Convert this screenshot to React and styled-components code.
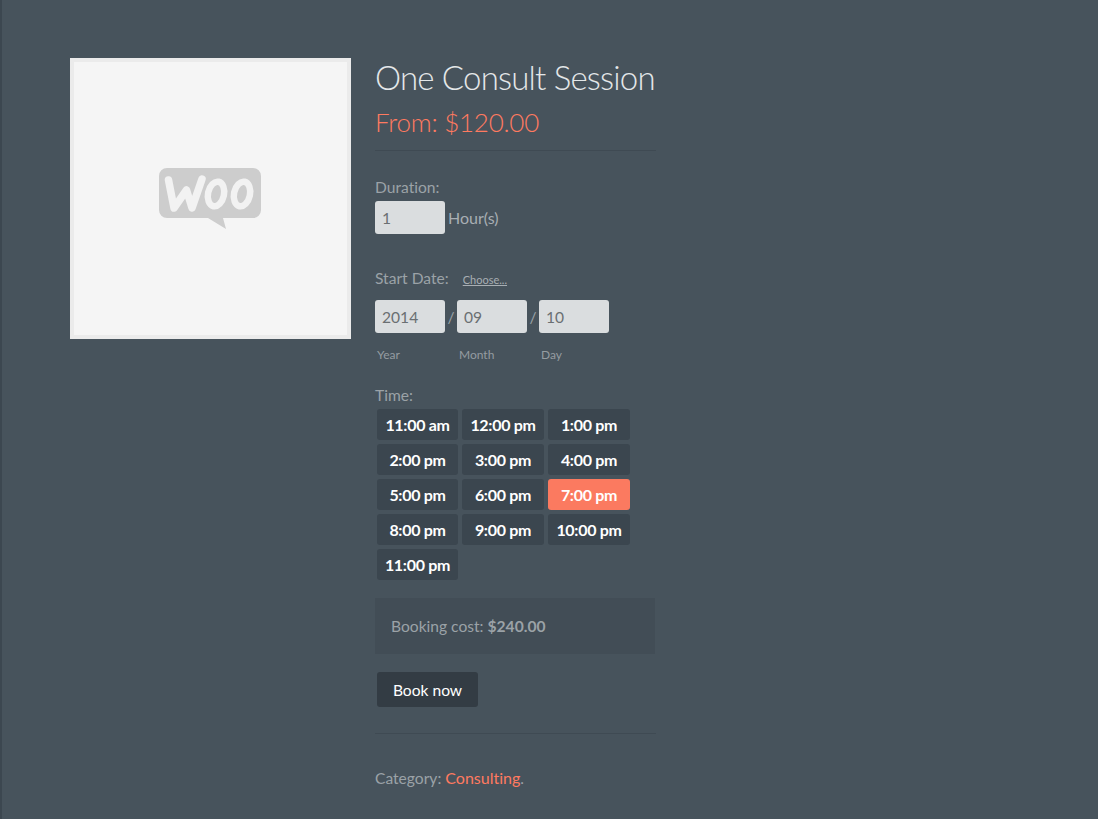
import React from "react";
import styled, { createGlobalStyle } from "styled-components";

const Global = createGlobalStyle`
html, body {
  margin: 0;
  padding: 0;
  background: #47535c;
}
`

const Page = styled.div`
box-sizing: border-box;
height: 819px;
overflow: hidden;
display: flex;
align-items: flex-start;
gap: 24px;
padding: 58px 0 0 68px;
border-left: 2px solid #3c4750;
background: #47535c;
font-family: "Lato", sans-serif;
font-size: 15.6px;
font-variant-ligatures: none;
color: #9ba2a7;
`
const Thumb = styled.div`
box-sizing: border-box;
width: 281px;
height: 281px;
padding: 0 1px 0 0;
display: flex;
align-items: center;
justify-content: center;
background: #f5f5f5;
border: 4px solid #ebebeb;
`
const LogoSvg = styled.svg`
display: block;
width: 102px;
height: 61px;
`
const Summary = styled.div`
width: 281px;
display: flex;
flex-direction: column;
`
const Title = styled.h1`
margin: 0;
font-size: 33px;
line-height: 38px;
font-weight: 300;
letter-spacing: -0.8px;
color: #e4e7e9;
white-space: nowrap;
`
const Price = styled.div`
margin-top: 11px;
font-size: 26px;
line-height: 30px;
font-weight: 300;
letter-spacing: -0.25px;
color: #ff7a60;
padding-bottom: 13px;
border-bottom: 1px solid #3f4a53;
`
const Label = styled.div`
line-height: 18px;
margin-top: ${(p) => p.$top}px;
display: flex;
align-items: baseline;
`
const Choose = styled.a`
margin-left: 14px;
font-size: 11px;
text-decoration: underline;
color: #a8aeb3;
`
const FieldRow = styled.div`
display: flex;
align-items: center;
margin-top: ${(p) => p.$top}px;
`
const Field = styled.div`
box-sizing: border-box;
width: 70px;
height: 33px;
padding: 0 7px;
border-radius: 3px;
background: #dadddf;
color: #6a6f72;
line-height: 34px;
`
const Slash = styled.span`
width: 12px;
text-align: center;
`
const Unit = styled.span`
margin-left: 3px;
font-size: 16px;
color: #a8aeb3;
`
const Captions = styled.div`
display: flex;
margin-top: 15px;
padding-left: 2px;
font-size: 12px;
line-height: 14px;
color: #959ca1;
`
const Caption = styled.span`
width: 82px;
`
const Slots = styled.div`
display: grid;
grid-template-columns: 81px 82px 82px;
grid-auto-rows: 31px;
gap: 4px;
margin: 5px 0 0 2px;
`
const Slot = styled.div`
display: flex;
align-items: center;
justify-content: center;
border-radius: 3px;
background: ${(p) => (p.$active ? "#fb7a60" : "#3b464f")};
color: #fff;
font-size: 16px;
font-weight: 700;
letter-spacing: -0.3px;
`
const Cost = styled.div`
box-sizing: border-box;
height: 56px;
width: 280px;
margin-top: 18px;
padding: 0 16px;
display: flex;
align-items: center;
gap: 4px;
background: #424d56;
`
const BookButton = styled.button`
align-self: flex-start;
margin: 18px 0 0 2px;
width: 101px;
height: 35px;
border: 0;
border-radius: 3px;
background: #333c44;
color: #fff;
font-family: inherit;
font-size: 15.6px;
font-variant-ligatures: none;
padding: 0;
`
const Rule = styled.div`
margin-top: 26px;
height: 1px;
background: #3f4a53;
`
const Meta = styled.div`
margin-top: 35px;
line-height: 18px;
`
const MetaLink = styled.a`
font-size: 16px;
color: #ff7a60;
`

const WooLogo = () => (
  <LogoSvg viewBox="0 0 102 61">
    <path
      d="M8 0H94a8 8 0 0 1 8 8V42a8 8 0 0 1-8 8H64L67 61L49 50H8a8 8 0 0 1-8-8V8a8 8 0 0 1 8-8Z"
      fill="#cdcdcd"
    />
    <path
      d="M9.5 12L15 40L27.5 22L33 40L43 11"
      fill="none"
      stroke="#f2f2f2"
      strokeWidth="7.5"
      strokeLinecap="round"
      strokeLinejoin="round"
    />
    <ellipse cx="57" cy="26" rx="8" ry="12.5" transform="rotate(12 57 26)" fill="none" stroke="#f2f2f2" strokeWidth="6.5" />
    <ellipse cx="83" cy="26" rx="8" ry="12.5" transform="rotate(12 83 26)" fill="none" stroke="#f2f2f2" strokeWidth="6.5" />
  </LogoSvg>
)

const slots = [
  "11:00 am", "12:00 pm", "1:00 pm",
  "2:00 pm", "3:00 pm", "4:00 pm",
  "5:00 pm", "6:00 pm", "7:00 pm",
  "8:00 pm", "9:00 pm", "10:00 pm",
  "11:00 pm",
]

export default function App() {
  return (
    <Page>
      <Global />
      <Thumb><WooLogo /></Thumb>
      <Summary>
        <Title>One Consult Session</Title>
        <Price>From: $120.00</Price>
        <Label $top={27}>Duration:</Label>
        <FieldRow $top={5}>
          <Field>1</Field>
          <Unit>Hour(s)</Unit>
        </FieldRow>
        <Label $top={35}>Start Date:<Choose>Choose...</Choose></Label>
        <FieldRow $top={11}>
          <Field>2014</Field>
          <Slash>/</Slash>
          <Field>09</Field>
          <Slash>/</Slash>
          <Field>10</Field>
        </FieldRow>
        <Captions>
          <Caption>Year</Caption>
          <Caption>Month</Caption>
          <Caption>Day</Caption>
        </Captions>
        <Label $top={24}>Time:</Label>
        <Slots>
          {slots.map((s) => (
            <Slot key={s} $active={s === "7:00 pm"}>{s}</Slot>
          ))}
        </Slots>
        <Cost>Booking cost: <b>$240.00</b></Cost>
        <BookButton>Book now</BookButton>
        <Rule />
        <Meta>Category: <MetaLink>Consulting</MetaLink>.</Meta>
      </Summary>
    </Page>
  )
}
